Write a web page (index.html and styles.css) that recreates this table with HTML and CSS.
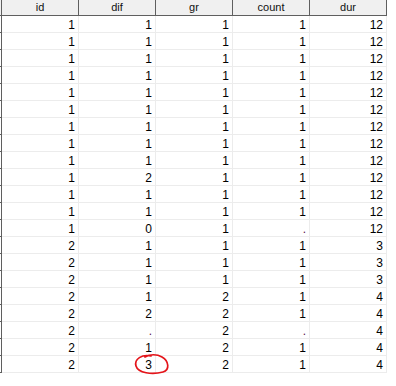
FILE: index.html
```html
<!DOCTYPE html>
<html>
<head>
<meta charset="utf-8">
<link rel="stylesheet" href="styles.css">
</head>
<body>
<div class="editor">
  <div class="grid">
    <div class="stub head"></div>
    <div class="hcell">id</div>
    <div class="hcell">dif</div>
    <div class="hcell">gr</div>
    <div class="hcell">count</div>
    <div class="hcell">dur</div>
  </div>
  <div class="grid" id="rows"></div>
  <svg class="mark" width="396" height="386" viewBox="0 0 396 386">
    <path d="M151 356 C142 354 134 359 136 366 C138 373 152 375 163 372 C170 370 169 361 162 357 C157 354 150 354 145 357" fill="none" stroke="#e4141a" stroke-width="1.7" stroke-linecap="round"/>
  </svg>
</div>
<script src="app.js"></script>
</body>
</html>
```
FILE: app.js
```js
var data = [
  [1,1,1,1,12],[1,1,1,1,12],[1,1,1,1,12],[1,1,1,1,12],[1,1,1,1,12],
  [1,1,1,1,12],[1,1,1,1,12],[1,1,1,1,12],[1,1,1,1,12],[1,2,1,1,12],
  [1,1,1,1,12],[1,1,1,1,12],[1,0,1,'.',12],[2,1,1,1,3],[2,1,1,1,3],
  [2,1,1,1,3],[2,1,2,1,4],[2,2,2,1,4],[2,'.',2,'.',4],[2,1,2,1,4],[2,3,2,1,4]
];
var rows = document.getElementById('rows');
data.forEach(function (r) {
  var s = document.createElement('div');
  s.className = 'stub';
  rows.appendChild(s);
  r.forEach(function (v) {
    var c = document.createElement('div');
    c.className = 'cell' + (v === '.' ? ' missing' : '');
    c.textContent = v;
    rows.appendChild(c);
  });
});
```
FILE: styles.css
```css
html, body {
  margin: 0;
  padding: 0;
  background: #ffffff;
}
.editor {
  position: relative;
  width: 396px;
  height: 386px;
  overflow: hidden;
  font-family: "Liberation Sans", Arial, sans-serif;
  color: #000;
}
.grid {
  display: grid;
  grid-template-columns: 2px repeat(5, 77px);
}
.stub {
  height: 16px;
  border-right: 1px solid #5f5f5f;
  border-bottom: 1px solid #5f5f5f;
}
.stub.head {
  height: 15px;
  background: #f0f0f0;
}
.hcell {
  height: 15px;
  line-height: 15px;
  font-size: 11px;
  text-align: center;
  color: #111;
  background: #f0f0f0;
  border-right: 1px solid #5f5f5f;
  border-bottom: 1px solid #5f5f5f;
}
.cell {
  height: 15px;
  line-height: 16px;
  padding-top: 1px;
  padding-right: 3px;
  font-size: 12px;
  text-align: right;
  border-right: 1px solid #ececec;
  border-bottom: 1px solid #ececec;
}
.cell.missing {
  color: #5c1448;
}
.mark {
  position: absolute;
  left: 0;
  top: 0;
  pointer-events: none;
}
```
